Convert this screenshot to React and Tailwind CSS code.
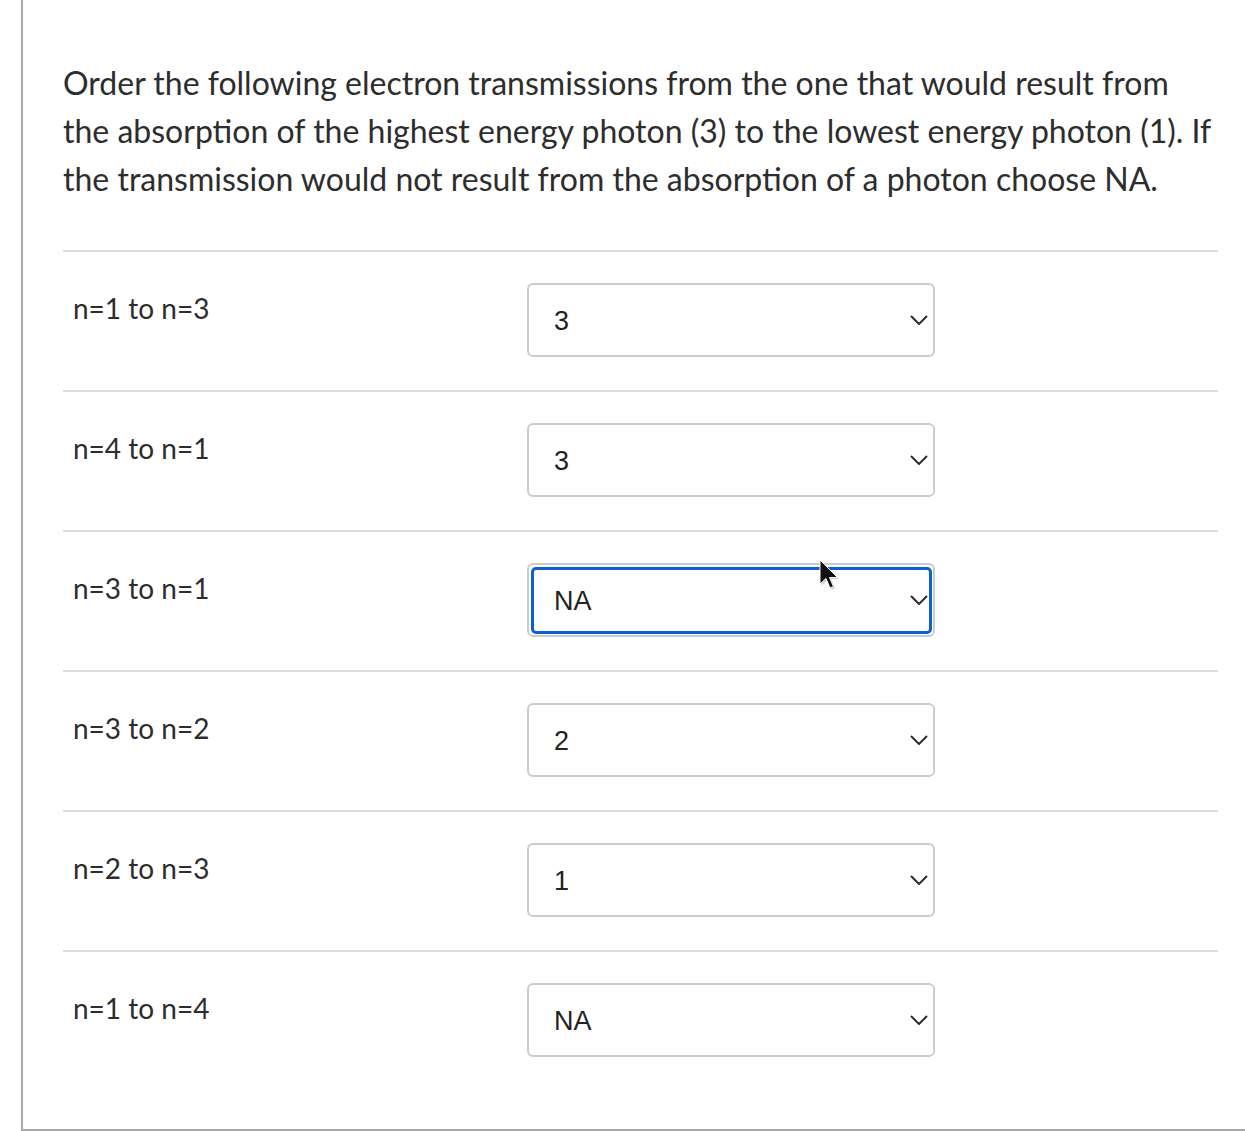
const rows = [
  { label: "n=1 to n=3", value: "3" },
  { label: "n=4 to n=1", value: "3" },
  { label: "n=3 to n=1", value: "NA", focused: true },
  { label: "n=3 to n=2", value: "2" },
  { label: "n=2 to n=3", value: "1" },
  { label: "n=1 to n=4", value: "NA" },
];

function Chevron() {
  return (
    <svg width="18" height="10" viewBox="0 0 18 10" fill="none" aria-hidden="true">
      <path d="M1 1L9 9L17 1" stroke="#2d2d2d" strokeWidth="2" />
    </svg>
  );
}

function Cursor() {
  return (
    <svg
      className="pointer-events-none absolute left-[289px] top-[-7px]"
      width="24"
      height="34"
      viewBox="0 0 24 34"
      aria-hidden="true"
    >
      <path d="M2 2L2 26L8 20.5L12 30L15.5 28.5L11.5 19.5L19.5 19.5Z" fill="#888" opacity="0.45" transform="translate(1.5 1.5)" />
      <path d="M2 2L2 26L8 20.5L12 30L15.5 28.5L11.5 19.5L19.5 19.5Z" fill="#111" stroke="#fff" strokeWidth="1" />
    </svg>
  );
}

function FakeSelect({ value, focused }) {
  return (
    <div className="relative flex h-[74px] w-[408px] items-center rounded-[6px] border-2 border-[#c9cdd1] bg-white pl-[25px] pr-[5px]">
      {focused && (
        <div className="absolute top-[2px] left-[2px] right-[1px] bottom-[1px] rounded-[5px] border-[3px] border-[#0b62cf]" />
      )}
      <span className="flex-1 pt-[3px] font-['Liberation_Sans',Arial,sans-serif] text-[27px] text-[#222]">
        {value}
      </span>
      <Chevron />
      {focused && <Cursor />}
    </div>
  );
}

export default function App() {
  return (
    <div className="min-h-screen bg-white">
      <div className="ml-[21px] border-l-2 border-b-2 border-[#a7a7a7] pt-[59px] pl-[40px] pr-[27px] pb-[39px] font-['Lato','Noto_Sans',sans-serif] text-[#2d2d2d]">
        <p className="text-[32px] leading-[48px]">
          Order the following electron transmissions from the one that would result from the absorption of
          the highest energy photon (3) to the lowest energy photon (1). If the transmission would not result
          from the absorption of a photon choose NA.
        </p>

        <div className="mt-[47px]">
          {rows.map((row) => (
            <div key={row.label} className="flex items-start border-t-2 border-[#dcdcdc] pt-[31px] pb-[33px]">
              <div className="mt-[7px] w-[464px] pl-[10px] text-[28px] leading-[36px]">{row.label}</div>
              <FakeSelect value={row.value} focused={row.focused} />
            </div>
          ))}
        </div>
      </div>
    </div>
  );
}
